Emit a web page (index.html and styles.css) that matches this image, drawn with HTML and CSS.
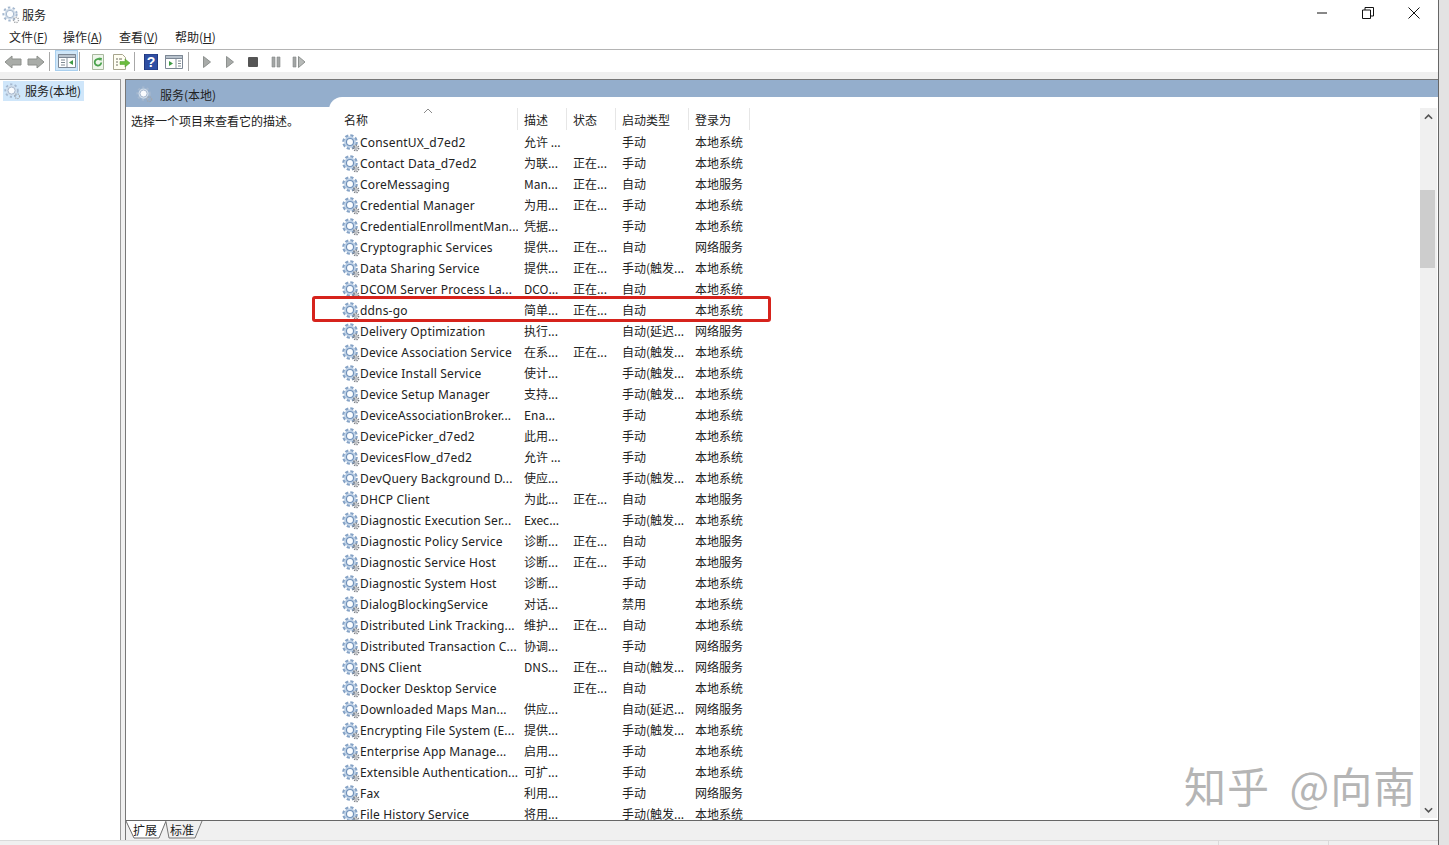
FILE: index.html
```html
<!DOCTYPE html>
<html lang="zh-CN">
<head>
<meta charset="utf-8">
<title>服务</title>
<link rel="stylesheet" href="styles.css">
</head>
<body>
<svg class="defs" width="0" height="0" aria-hidden="true">
  <symbol id="gear" viewBox="0 0 18 18">
    <circle cx="8" cy="8" r="6.600" fill="none" stroke="#86a3c6" stroke-width="2.400" stroke-dasharray="3.200 2"/>
    <circle cx="8" cy="8" r="5.800" fill="#bcd0e6"/>
    <circle cx="8" cy="8" r="3.500" fill="#fbfdff" stroke="#6f8fb8" stroke-width="1.100"/>
    <circle cx="14" cy="14" r="2.600" fill="none" stroke="#7b7f85" stroke-width="1.600" stroke-dasharray="1.300 1"/>
    <circle cx="14" cy="14" r="1.300" fill="#e4e6e9" stroke="#70747a" stroke-width=".5"/>
  </symbol>
  <symbol id="gearlight" viewBox="0 0 18 18">
    <circle cx="8" cy="8" r="6.600" fill="none" stroke="#a5b8cf" stroke-width="2" stroke-dasharray="2.400 2.400"/>
    <circle cx="8" cy="8" r="5.400" fill="#d0dce9"/>
    <circle cx="8" cy="8" r="3.700" fill="#fafcfe" stroke="#93a8c2" stroke-width=".8"/>
    <circle cx="14" cy="14" r="2.500" fill="none" stroke="#a2a5a9" stroke-width="1.400" stroke-dasharray="1.200 1"/>
  </symbol>
</svg>
<div class="window">
  <header class="titlebar">
    <svg class="title-icon"><use href="#gearlight"/></svg>
    <span class="title-text">服务</span>
    <div class="controls">
      <svg class="ctl" viewBox="0 0 12 12"><path d="M1 6h10" stroke="#111" fill="none"/></svg>
      <svg class="ctl" viewBox="0 0 12 12"><path d="M.5 3h8v8.500h-8zM3 3V.5h8.500V9H8.500" stroke="#111" fill="none"/></svg>
      <svg class="ctl" viewBox="0 0 12 12"><path d="M.5.500l11 11M11.500.500l-11 11" stroke="#111" fill="none"/></svg>
    </div>
  </header>
  <nav class="menubar">
    <span class="menu">文件(<u>F</u>)</span>
    <span class="menu">操作(<u>A</u>)</span>
    <span class="menu">查看(<u>V</u>)</span>
    <span class="menu">帮助(<u>H</u>)</span>
  </nav>
  <div class="toolbar">
    <span class="tb"><svg viewBox="0 0 18 16"><path d="M1 8l7-6v3h9v6H8v3z" fill="#a9aca8" stroke="#8d908c"/></svg></span>
    <span class="tb"><svg viewBox="0 0 18 16"><path d="M17 8l-7-6v3H1v6h9v3z" fill="#a9aca8" stroke="#8d908c"/></svg></span>
    <i class="sep s1"></i>
    <span class="tb on"><svg viewBox="0 0 18 16"><path d="M.5 1.500h17v13H.5z" fill="#fff" stroke="#7c8794"/><path d="M.5 1.500h17v3H.5z" fill="#b9c3cd" stroke="#7c8794"/><path d="M3 7h4M3 9.500h4M3 12h4" stroke="#7f8a93"/><path d="M9 5v9" stroke="#8b96a0"/><path d="M15 7l-4 2.500 4 2.500z" fill="#3e9a45"/></svg></span>
    <i class="sep s2"></i>
    <span class="tb"><svg viewBox="0 0 18 16"><path d="M3.500.500h11v15h-11z" fill="#eef6ea" stroke="#a9b89f"/><path d="M12.300 8.500a3.300 3.300 0 1 1-1.200-2.800" fill="none" stroke="#4aa24c" stroke-width="1.800"/><path d="M9.500 3.500l3.500.5-.8 3.200z" fill="#4aa24c"/></svg></span>
    <span class="tb"><svg viewBox="0 0 18 16"><path d="M1.500.500h9l3 3v12h-12z" fill="#fffef2" stroke="#a7a58d"/><path d="M4 5h2M4 8h2M4 11h2M7 5h3" stroke="#6c6c60"/><path d="M8 7.500h5V5l5 4-5 4v-2.500H8z" fill="#6cbd3c" stroke="#4f9a2a" stroke-width=".5"/></svg></span>
    <i class="sep s3"></i>
    <span class="tb"><svg viewBox="0 0 18 16"><rect x="2.500" y="0" width="13" height="16" fill="#2f4fa3" stroke="#22387c"/><text class="q" x="9" y="13">?</text></svg></span>
    <span class="tb"><svg viewBox="0 0 18 16"><path d="M.5 1.500h17v13H.5z" fill="#fff" stroke="#7c8794"/><path d="M.5 1.500h17v3H.5z" fill="#b9c3cd" stroke="#7c8794"/><path d="M11 5v9" stroke="#8b96a0"/><path d="M13 7h3M13 9.500h3M13 12h3" stroke="#7f8a93"/><path d="M4 7l4 2.500L4 12z" fill="#3e9a45"/></svg></span>
    <i class="sep s4"></i>
    <span class="tb"><svg viewBox="0 0 18 16"><path d="M5.500 2.500l7 5.500-7 5.500z" fill="#a8aba9" stroke="#8d918f"/></svg></span>
    <span class="tb"><svg viewBox="0 0 18 16"><path d="M5.500 2.500l7 5.500-7 5.500z" fill="#a8aba9" stroke="#8d918f"/></svg></span>
    <span class="tb"><svg viewBox="0 0 18 16"><rect x="4" y="3" width="10" height="10" rx="1" fill="#555"/></svg></span>
    <span class="tb"><svg viewBox="0 0 18 16"><path d="M5 3h3v10H5zM10 3h3v10h-3z" fill="#a3a6a5" stroke="#858887" stroke-width=".6"/></svg></span>
    <span class="tb"><svg viewBox="0 0 18 16"><path d="M3 3h3v10H3z" fill="#a3a6a5" stroke="#858887" stroke-width=".6"/><path d="M8.500 2.500l6.500 5.500-6.500 5.500z" fill="#b7bab8" stroke="#8d918f"/></svg></span>
  </div>
  <main class="workspace">
    <aside class="tree">
      <div class="tree-item"><svg class="tree-gear"><use href="#gearlight"/></svg>服务(本地)</div>
    </aside>
    <section class="detail">
      <div class="band"><svg class="band-gear"><use href="#gearlight"/></svg><span>服务(本地)</span></div>
      <div class="body">
        <div class="desc">
          <p class="desc-text">选择一个项目来查看它的描述。</p>
        </div>
        <div class="list-pane">
          <div class="table">
            <div class="row head">
              <span class="hname">名称<svg class="sort" viewBox="0 0 10 6"><path d="M1 5l4-4 4 4" fill="none" stroke="#8a8a8a"/></svg></span>
              <span>描述</span><span>状态</span><span>启动类型</span><span>登录为</span>
            </div>
            <div class="rows">
              <div class="row"><span class="name"><svg class="gear"><use href="#gear"/></svg>ConsentUX_d7ed2</span><span>允许 ...</span><span></span><span>手动</span><span>本地系统</span></div>
              <div class="row"><span class="name"><svg class="gear"><use href="#gear"/></svg>Contact Data_d7ed2</span><span>为联...</span><span>正在...</span><span>手动</span><span>本地系统</span></div>
              <div class="row"><span class="name"><svg class="gear"><use href="#gear"/></svg>CoreMessaging</span><span>Man...</span><span>正在...</span><span>自动</span><span>本地服务</span></div>
              <div class="row"><span class="name"><svg class="gear"><use href="#gear"/></svg>Credential Manager</span><span>为用...</span><span>正在...</span><span>手动</span><span>本地系统</span></div>
              <div class="row"><span class="name"><svg class="gear"><use href="#gear"/></svg>CredentialEnrollmentMan...</span><span>凭据...</span><span></span><span>手动</span><span>本地系统</span></div>
              <div class="row"><span class="name"><svg class="gear"><use href="#gear"/></svg>Cryptographic Services</span><span>提供...</span><span>正在...</span><span>自动</span><span>网络服务</span></div>
              <div class="row"><span class="name"><svg class="gear"><use href="#gear"/></svg>Data Sharing Service</span><span>提供...</span><span>正在...</span><span>手动(触发...</span><span>本地系统</span></div>
              <div class="row"><span class="name"><svg class="gear"><use href="#gear"/></svg>DCOM Server Process La...</span><span>DCO...</span><span>正在...</span><span>自动</span><span>本地系统</span></div>
              <div class="row"><span class="name"><svg class="gear"><use href="#gear"/></svg>ddns-go</span><span>简单...</span><span>正在...</span><span>自动</span><span>本地系统</span></div>
              <div class="row"><span class="name"><svg class="gear"><use href="#gear"/></svg>Delivery Optimization</span><span>执行...</span><span></span><span>自动(延迟...</span><span>网络服务</span></div>
              <div class="row"><span class="name"><svg class="gear"><use href="#gear"/></svg>Device Association Service</span><span>在系...</span><span>正在...</span><span>自动(触发...</span><span>本地系统</span></div>
              <div class="row"><span class="name"><svg class="gear"><use href="#gear"/></svg>Device Install Service</span><span>使计...</span><span></span><span>手动(触发...</span><span>本地系统</span></div>
              <div class="row"><span class="name"><svg class="gear"><use href="#gear"/></svg>Device Setup Manager</span><span>支持...</span><span></span><span>手动(触发...</span><span>本地系统</span></div>
              <div class="row"><span class="name"><svg class="gear"><use href="#gear"/></svg>DeviceAssociationBroker...</span><span>Ena...</span><span></span><span>手动</span><span>本地系统</span></div>
              <div class="row"><span class="name"><svg class="gear"><use href="#gear"/></svg>DevicePicker_d7ed2</span><span>此用...</span><span></span><span>手动</span><span>本地系统</span></div>
              <div class="row"><span class="name"><svg class="gear"><use href="#gear"/></svg>DevicesFlow_d7ed2</span><span>允许 ...</span><span></span><span>手动</span><span>本地系统</span></div>
              <div class="row"><span class="name"><svg class="gear"><use href="#gear"/></svg>DevQuery Background D...</span><span>使应...</span><span></span><span>手动(触发...</span><span>本地系统</span></div>
              <div class="row"><span class="name"><svg class="gear"><use href="#gear"/></svg>DHCP Client</span><span>为此...</span><span>正在...</span><span>自动</span><span>本地服务</span></div>
              <div class="row"><span class="name"><svg class="gear"><use href="#gear"/></svg>Diagnostic Execution Ser...</span><span>Exec...</span><span></span><span>手动(触发...</span><span>本地系统</span></div>
              <div class="row"><span class="name"><svg class="gear"><use href="#gear"/></svg>Diagnostic Policy Service</span><span>诊断...</span><span>正在...</span><span>自动</span><span>本地服务</span></div>
              <div class="row"><span class="name"><svg class="gear"><use href="#gear"/></svg>Diagnostic Service Host</span><span>诊断...</span><span>正在...</span><span>手动</span><span>本地服务</span></div>
              <div class="row"><span class="name"><svg class="gear"><use href="#gear"/></svg>Diagnostic System Host</span><span>诊断...</span><span></span><span>手动</span><span>本地系统</span></div>
              <div class="row"><span class="name"><svg class="gear"><use href="#gear"/></svg>DialogBlockingService</span><span>对话...</span><span></span><span>禁用</span><span>本地系统</span></div>
              <div class="row"><span class="name"><svg class="gear"><use href="#gear"/></svg>Distributed Link Tracking...</span><span>维护...</span><span>正在...</span><span>自动</span><span>本地系统</span></div>
              <div class="row"><span class="name"><svg class="gear"><use href="#gear"/></svg>Distributed Transaction C...</span><span>协调...</span><span></span><span>手动</span><span>网络服务</span></div>
              <div class="row"><span class="name"><svg class="gear"><use href="#gear"/></svg>DNS Client</span><span>DNS...</span><span>正在...</span><span>自动(触发...</span><span>网络服务</span></div>
              <div class="row"><span class="name"><svg class="gear"><use href="#gear"/></svg>Docker Desktop Service</span><span></span><span>正在...</span><span>自动</span><span>本地系统</span></div>
              <div class="row"><span class="name"><svg class="gear"><use href="#gear"/></svg>Downloaded Maps Man...</span><span>供应...</span><span></span><span>自动(延迟...</span><span>网络服务</span></div>
              <div class="row"><span class="name"><svg class="gear"><use href="#gear"/></svg>Encrypting File System (E...</span><span>提供...</span><span></span><span>手动(触发...</span><span>本地系统</span></div>
              <div class="row"><span class="name"><svg class="gear"><use href="#gear"/></svg>Enterprise App Manage...</span><span>启用...</span><span></span><span>手动</span><span>本地系统</span></div>
              <div class="row"><span class="name"><svg class="gear"><use href="#gear"/></svg>Extensible Authentication...</span><span>可扩...</span><span></span><span>手动</span><span>本地系统</span></div>
              <div class="row"><span class="name"><svg class="gear"><use href="#gear"/></svg>Fax</span><span>利用...</span><span></span><span>手动</span><span>网络服务</span></div>
              <div class="row"><span class="name"><svg class="gear"><use href="#gear"/></svg>File History Service</span><span>将用...</span><span></span><span>手动(触发...</span><span>本地系统</span></div>
            </div>
          </div>
          <div class="scrollbar">
            <span class="sb-btn"><svg viewBox="0 0 10 6"><path d="M1 5l4-4 4 4" fill="none" stroke="#555" stroke-width="1.800"/></svg></span>
            <span class="thumb"></span>
            <span class="sb-btn sb-end"><svg viewBox="0 0 10 6"><path d="M1 1l4 4 4-4" fill="none" stroke="#555" stroke-width="1.800"/></svg></span>
          </div>
        </div>
      </div>
      <div class="tabs">
        <svg class="tab-shape" viewBox="0 0 82 20"><path d="M0 0L8 17H33L40 0" fill="#fff" stroke="#6f6f6f"/><path d="M40 1L43 17H69L76 0" fill="none" stroke="#777"/></svg>
        <span class="tab">扩展</span><span class="tab tab2">标准</span>
      </div>
    </section>
  </main>
  <footer class="status"><i></i><i></i></footer>
</div>
<div class="highlight"></div>
<div class="watermark">知乎 @向南</div>
</body>
</html>
```

FILE: styles.css
```css
* { box-sizing: border-box; }
html, body { margin: 0; height: 100%; }
body {
  position: relative;
  width: 1449px;
  height: 845px;
  overflow: hidden;
  background: #e3e3e3;
  font: 12px/1 "Noto Sans CJK SC", "Noto Sans", sans-serif;
  color: #222;
}
.defs { position: absolute; }
.window {
  width: 1439px;
  height: 845px;
  display: flex;
  flex-direction: column;
  background: #fff;
  border-right: 1px solid #666;
}
.titlebar { height: 27px; display: flex; align-items: center; padding: 2px 0 0 2px; flex: none; }
.title-icon { width: 18px; height: 18px; }
.title-text { margin-left: 2px; }
.controls { margin-left: auto; display: flex; gap: 34px; padding-right: 18px; margin-top: -3px; }
.ctl { width: 12px; height: 12px; }
.menubar {
  height: 23px; flex: none; display: flex; padding: 0 0 2px 3px; align-items: center;
  border-bottom: 1px solid #b4b4b4;
}
.menu { padding: 0 6px; width: 56px; white-space: nowrap; }
.menu:first-child { width: 54px; }
.menu u { text-underline-offset: 1px; }
.toolbar { height: 22px; flex: none; display: flex; padding: 1px 0 0 1px; }
.tb { width: 23px; height: 21px; display: flex; align-items: center; justify-content: center; }
.tb svg { width: 18px; height: 16px; }
.tb.on { background: #cfe6f8; border: 1px solid #a9cfee; margin-top: -1px; }
.q { font: bold 14px "Liberation Sans", sans-serif; fill: #fff; text-anchor: middle; }
.sep { width: 1px; height: 19px; background: #a8a8a8; }
.s1 { margin: 1px 5px 0 2px; }
.s2 { margin: 1px 6px 0 1px; }
.s3 { margin: 1px 4px 0 2px; }
.s4 { margin: 1px 6px 0 3px; }
.workspace {
  flex: 1; min-height: 0; display: flex; background: #f0f0f0; padding-top: 7px;
}
.tree {
  width: 121px; flex: none; background: #fff;
  border-top: 1px solid #a0a0a0; border-right: 1px solid #999; padding: 1px 0 0 3px;
}
.tree-item {
  width: 81px; height: 20px; background: #cfe6fa; display: flex; align-items: center; white-space: nowrap;
}
.tree-gear { width: 17px; height: 17px; margin: 0 4px 0 1px; flex: none; }
.detail {
  margin-left: 4px; width: 1313px; display: flex; flex-direction: column;
  border-left: 1px solid #777; border-top: 1px solid #777; background: #fff;
}
.band {
  position: relative; z-index: 1;
  height: 17px; flex: none; background: #94aecc; padding: 1px 0 0 10px;
  display: flex; align-items: flex-start;
}
.band-gear { width: 17px; height: 17px; margin-top: 5px; }
.band span { margin: 6px 0 0 7px; white-space: nowrap; line-height: 1.3; }
.body {
  flex: 1; min-height: 0; display: flex;
  background: linear-gradient(#94aecc 10px, #fff 10px);
}
.desc { width: 203px; flex: none; padding: 18px 0 0 5px; }
.desc-text { margin: 0; white-space: nowrap; }
.list-pane {
  flex: 1; min-width: 0; display: flex; justify-content: space-between;
  background: #fff; border-top-left-radius: 13px; padding: 11px 1px 0 12px; overflow: hidden;
}
.table { width: 409px; overflow: hidden; height: 712px; }
.row {
  display: grid; grid-template-columns: 177px 49px 49px 73px 61px;
  height: 21px; align-items: center; white-space: nowrap;
}
.row > span { padding-left: 6px; overflow: hidden; line-height: 17px; height: 19px; }
.row > .name {
  padding-left: 1px; display: flex; align-items: center; height: 21px;
  font: 12px/21px "Noto Sans", sans-serif; color: #222; letter-spacing: .17px;
}
.gear { width: 18px; height: 18px; margin-right: 0; flex: none; }
.head { height: 24px; position: relative; align-items: start; }
.head > span { height: 22px; display: flex; align-items: center; border-right: 1px solid #e6e6e6; }
.head > .hname { padding-left: 3px; overflow: visible; }
.sort { position: absolute; left: 82px; top: 0; width: 10px; height: 6px; }
.scrollbar {
  width: 17px; flex: none; background: #f0f0f0; height: 710px;
  display: flex; flex-direction: column;
}
.sb-btn { height: 17px; flex: none; display: flex; align-items: center; justify-content: center; }
.sb-btn svg { width: 9px; height: 6px; }
.thumb { width: 15px; height: 78px; margin-top: 65px; background: #cdcdcd; }
.sb-end { margin-top: auto; }
.tabs {
  height: 20px; flex: none; position: relative; display: flex; background: #f0f0f0;
  border-top: 1px solid #666; padding-left: 7px; align-items: center;
}
.tab-shape { position: absolute; left: 0; top: 0; width: 82px; height: 20px; }
.tab { position: relative; width: 37px; padding-bottom: 1px; }
.status {
  height: 5px; flex: none; background: #f0f0f0; border-top: 1px solid #dadada; position: relative;
  display: flex; padding-left: 1218px;
}
.status i { width: 134px; border-left: 1px solid #dadada; }
.highlight {
  position: absolute; left: 312px; top: 296px; width: 459px; height: 26px;
  border: 3px solid #d6231c; border-radius: 3px;
}
.watermark {
  position: absolute; left: 1184px; top: 762px; white-space: nowrap; word-spacing: 9px;
  font: 42px/1.100 "Noto Sans CJK SC", sans-serif; color: #b5b5b5; letter-spacing: 1px;
}
```
